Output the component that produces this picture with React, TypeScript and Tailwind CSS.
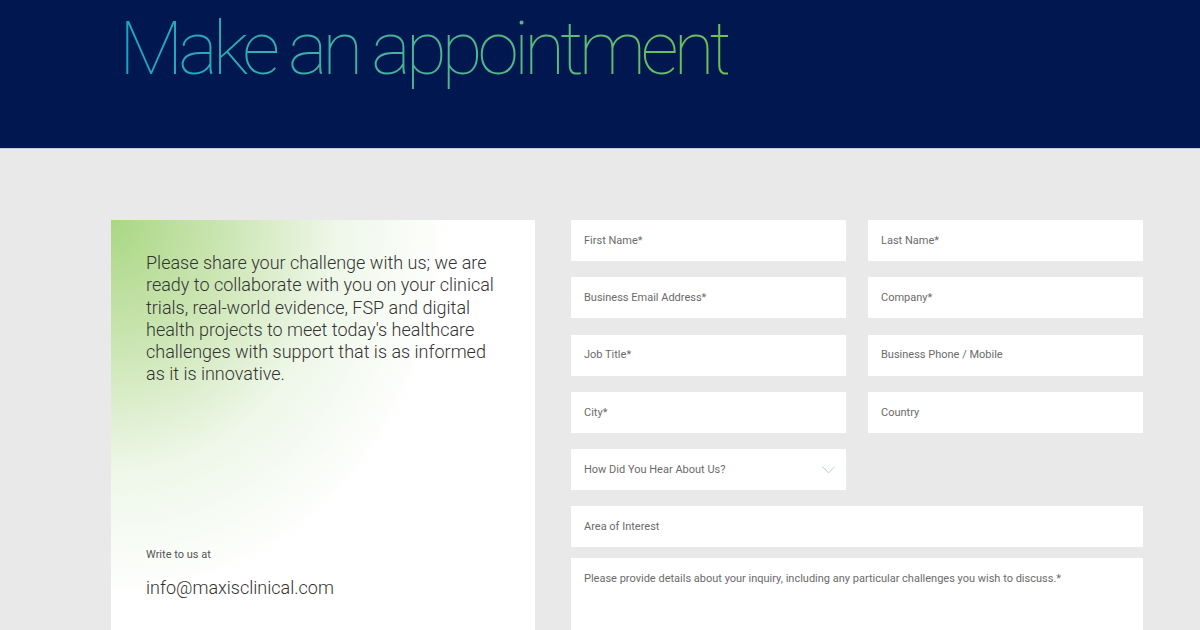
const fieldCls =
  'h-[41px] bg-white flex items-center px-[13px] pt-[1px] text-[11px] text-[#6b6b6b]';

function Chevron() {
  return (
    <svg width="13" height="8" viewBox="0 0 13 8" fill="none" className="mr-[-2px]">
      <defs>
        <linearGradient id="chev" x1="0" y1="0" x2="1" y2="0">
          <stop offset="0%" stopColor="#8cc8e6" />
          <stop offset="100%" stopColor="#a8e0b0" />
        </linearGradient>
      </defs>
      <path d="M0.5 0.8 L6.5 6.8 L12.5 0.8" stroke="url(#chev)" strokeWidth="1" />
    </svg>
  );
}

function Field({ label, wide, select }: { label: string; wide?: boolean; select?: boolean }) {
  return (
    <div className={`${fieldCls} ${wide ? 'col-span-2' : ''} justify-between`}>
      <span>{label}</span>
      {select && <Chevron />}
    </div>
  );
}

export default function App() {
  return (
    <div className="w-[1200px] h-[630px] overflow-hidden bg-[#e8e9e8]" style={{ fontFamily: 'Roboto, "Liberation Sans", sans-serif' }}>
      {/* Header */}
      <header className="h-[149px] bg-[#00174f] border-b border-[#c9ccd4] pl-[119px]">
        <h1 className="pt-[6px] text-[75px] leading-[84px] font-thin tracking-[-0.068em] bg-gradient-to-r from-[#17a5c6] to-[#6fc251] bg-clip-text text-transparent w-fit">
          Make an appointment
        </h1>
      </header>

      <main className="flex gap-[36px] pt-[71px] pl-[111px]">
        {/* Left card */}
        <section
          className="w-[424px] h-[420px] bg-white pl-[35px] pr-[30px] pt-[32px] flex flex-col"
          style={{ backgroundImage: 'radial-gradient(ellipse 340px 380px at 0% 0%, #a9d783 0%, #cde6b5 35%, #eef7e8 66%, #ffffff 100%)' }}
        >
          <p className="text-[18px] leading-[22.3px] font-light text-[#333]">
            Please share your challenge with us; we are ready to collaborate with you on your clinical trials, real-world
            evidence, FSP and digital health projects to meet today's healthcare challenges with support that is as informed
            as it is innovative.
          </p>
          <div className="mt-[161px] text-[11px] text-[#555]">Write to us at</div>
          <div className="mt-[11px] text-[18px] font-light text-[#333]">info@maxisclinical.com</div>
        </section>

        {/* Form */}
        <form className="w-[572px] grid grid-cols-2 gap-x-[22px] gap-y-[16.3px] content-start">
          <Field label="First Name*" />
          <Field label="Last Name*" />
          <Field label="Business Email Address*" />
          <Field label="Company*" />
          <Field label="Job Title*" />
          <Field label="Business Phone / Mobile" />
          <Field label="City*" />
          <Field label="Country" />
          <Field label="How Did You Hear About Us?" select />
          <div />
          <Field label="Area of Interest" wide />
          <div className="col-span-2 -mt-[6px] h-[120px] bg-white px-[13px] pt-[13px] text-[11px] text-[#6b6b6b]">
            Please provide details about your inquiry, including any particular challenges you wish to discuss.*
          </div>
        </form>
      </main>
    </div>
  );
}
